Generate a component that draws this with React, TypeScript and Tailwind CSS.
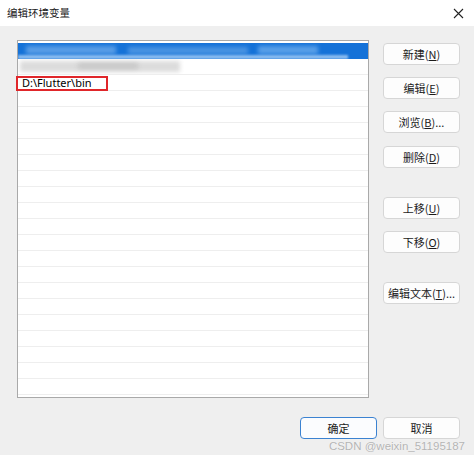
import React from "react";

const cjk = { fontFamily: '"Noto Sans CJK SC", "Noto Sans", sans-serif' };

function Btn({ label, hot, tail, primary }: { label: string; hot?: string; tail?: string; primary?: boolean }) {
  return (
    <div
      className={`h-[22px] w-[77px] rounded-[4px] border flex items-center justify-center text-[11px] text-[#1b1b1b] ${
        primary ? "border-[#3b82d1] bg-[#fbfcfe]" : "border-[#d6d6d6] bg-[#fdfdfd]"
      }`}
      style={cjk}
    >
      <span>
        {label}
        {hot && (
          <>
            (<u>{hot}</u>)
          </>
        )}
        {tail}
      </span>
    </div>
  );
}

export default function App() {
  const emptyRows = Array.from({ length: 19 });

  return (
    <div className="w-[474px] h-[455px] bg-[#efefef] flex flex-col overflow-hidden relative" style={cjk}>
      {/* Title bar */}
      <div className="h-[26px] bg-white flex items-center justify-between pl-[7px] pr-[10px]">
        <span className="text-[10.5px] text-[#1a1a1a]">编辑环境变量</span>
        <svg width="11" height="11" viewBox="0 0 11 11" className="text-[#222]">
          <path d="M1 1 L10 10 M10 1 L1 10" stroke="currentColor" strokeWidth="1.1" />
        </svg>
      </div>

      {/* Body */}
      <div className="flex pl-[17px] pt-[14px] gap-[14px]">
        <div className="w-[352px] h-[358px] bg-white border border-[#a9a9a9] pt-[2px] flex flex-col">
          {/* selected (blurred) row */}
          <div className="h-[16px] shrink-0 bg-[#1572d8] relative overflow-hidden">
            <div className="absolute left-[8px] top-[3px] w-[90px] h-[8px] bg-[#5a9ee6] blur-[2px]" />
            <div className="absolute left-[110px] top-[4px] w-[120px] h-[7px] bg-[#4b94e2] blur-[2px]" />
            <div className="absolute left-[240px] top-[3px] w-[60px] h-[8px] bg-[#5aa0e8] blur-[2px]" />
            <div className="absolute left-0 bottom-0 w-[330px] h-[4px] bg-[#8cbdf0] blur-[1px]" />
          </div>
          {/* blurred second row */}
          <div className="h-[16px] shrink-0 border-b border-[#eeeeee] relative overflow-hidden">
            <div className="absolute left-[2px] top-[2px] w-[160px] h-[11px] bg-[#dcdcdc] blur-[2px]" />
            <div className="absolute left-[60px] top-[4px] w-[60px] h-[6px] bg-[#c8c8c8] blur-[2px]" />
          </div>
          {/* D:\Flutter\bin */}
          <div className="h-[16px] shrink-0 border-b border-[#eeeeee] relative">
            <div className="absolute left-[-2px] top-[1px] w-[92px] h-[15px] border-2 border-[#e0262a]" />
            <span
              className="absolute left-[4px] top-[0px] text-[11px] leading-[16px] text-black"
              style={{ fontFamily: '"Noto Sans", "Liberation Sans", sans-serif' }}
            >
              D:\Flutter\bin
            </span>
          </div>
          {emptyRows.map((_, i) => (
            <div key={i} className="h-[16px] shrink-0 border-b border-[#eeeeee]" />
          ))}
        </div>

        <div className="flex flex-col pt-[3px]">
          <Btn label="新建" hot="N" />
          <div className="h-[12px]" />
          <Btn label="编辑" hot="E" />
          <div className="h-[12px]" />
          <Btn label="浏览" hot="B" tail="..." />
          <div className="h-[13px]" />
          <Btn label="删除" hot="D" />
          <div className="h-[29px]" />
          <Btn label="上移" hot="U" />
          <div className="h-[12px]" />
          <Btn label="下移" hot="O" />
          <div className="h-[29px]" />
          <Btn label="编辑文本" hot="T" tail="..." />
        </div>
      </div>

      {/* Footer buttons */}
      <div className="flex justify-end gap-[6px] pr-[14px] pt-[19px]">
        <Btn label="确定" primary />
        <Btn label="取消" />
      </div>

      <div
        className="absolute right-[9px] bottom-[2px] text-[11.5px] leading-[14px] text-[#b4b4b4]"
        style={{ fontFamily: '"Liberation Sans", Arial, sans-serif', textShadow: "0 0 1px #ffffff" }}
      >
        CSDN @weixin_51195187
      </div>
    </div>
  );
}
